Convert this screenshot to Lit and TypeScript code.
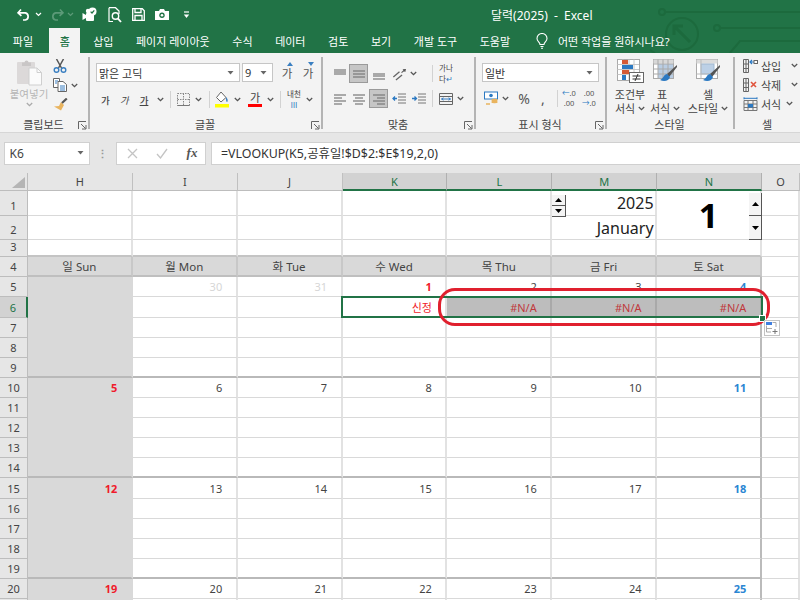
import { LitElement, html, css, svg } from "lit";
import { customElement } from "lit/decorators.js";

const chev = html`<svg class="chev" width="7" height="5" viewBox="0 0 7 5"><path d="M.8 1 3.5 3.7 6.2 1" fill="none" stroke="#555" stroke-width="1.3"/></svg>`;
const tri = html`<svg width="7" height="4" viewBox="0 0 7 4"><path d="M.5 0h6L3.5 3.6z" fill="#666"/></svg>`;
const launcher = html`<svg class="launch" width="9" height="9" viewBox="0 0 9 9"><path d="M.5 8V.5H8M3 3l4.500 4.500M4 8h4V4" fill="none" stroke="#666" stroke-width="1"/></svg>`;
const qchev = html`<svg width="7" height="5" viewBox="0 0 7 5"><path d="M1 1l2.500 2.500L6 1" fill="none" stroke="#fff" stroke-width="1.2"/></svg>`;
const qchevDim = html`<svg width="7" height="5" viewBox="0 0 7 5"><path d="M1 1l2.500 2.500L6 1" fill="none" stroke="#5c9a78" stroke-width="1.2"/></svg>`;
const vsep = html`<span class="vsep"></span>`;

const lines = (ys: number[][], stroke = "#777") =>
  svg`${ys.map(([x1, x2, y]) => svg`<path d="M${x1} ${y}H${x2}" stroke=${stroke} stroke-width="1.2"/>`)}`;
const alignIcon = (ys: number[][]) => html`<svg width="14" height="14" viewBox="0 0 14 14">${lines(ys)}</svg>`;

const icons = {
  undo: html`<svg width="14" height="13" viewBox="0 0 14 13"><path d="M4 1.500 1 4.800l3.400 3M1.500 4.800h6.800a3.700 3.700 0 0 1 0 7.200H6" fill="none" stroke="#fff" stroke-width="1.7"/></svg>`,
  redo: html`<svg width="14" height="13" viewBox="0 0 14 13"><path d="M10 1.500l3 3.300-3.400 3M12.500 4.800H5.700a3.700 3.700 0 0 0 0 7.200H8" fill="none" stroke="#5c9a78" stroke-width="1.7"/></svg>`,
  qa1: html`<svg width="16" height="15" viewBox="0 0 16 15"><path d="M.5 6 4 8v3l-3.500 2z" fill="#fff"/><rect x="4" y="6" width="8" height="8" rx="1" fill="#fff"/><circle cx="10.500" cy="4.500" r="4" fill="#fff"/><path d="M8.600 4.600l1.400 1.400 2.300-2.600" fill="none" stroke="#217346" stroke-width="1.2"/><circle cx="6" cy="4" r="2.200" fill="#fff"/></svg>`,
  qa2: html`<svg width="14" height="16" viewBox="0 0 14 16"><path d="M1 .7h6.500L11 4v3M1 .7V14.500h4" fill="none" stroke="#fff" stroke-width="1.2"/><circle cx="7.500" cy="9" r="3.200" fill="none" stroke="#fff" stroke-width="1.400"/><path d="M9.800 11.300 13 15" stroke="#fff" stroke-width="1.800"/></svg>`,
  save: html`<svg width="13" height="13" viewBox="0 0 13 13"><path d="M.7.7h9.600L12.300 2.700V12.300H.7z" fill="none" stroke="#fff" stroke-width="1.300"/><path d="M3 1v3.500h6V1M3 12V7.500h7V12" fill="none" stroke="#fff" stroke-width="1.300"/></svg>`,
  camera: html`<svg width="14" height="11" viewBox="0 0 14 11"><path d="M0 2h4l1-2h4l1 2h4v9H0z" fill="#fff"/><circle cx="7" cy="6.200" r="2.700" fill="#217346"/><circle cx="7" cy="6.200" r="1.300" fill="#fff"/></svg>`,
  more: html`<svg width="7" height="8" viewBox="0 0 7 8"><path d="M1 1h5" stroke="#fff" stroke-width="1.200"/><path d="M.8 3.500h5.400L3.500 7z" fill="#fff"/></svg>`,
  bulb: html`<svg width="12" height="16" viewBox="0 0 12 16"><path d="M4 11.500C4 9 1 8.500 1 5.500a5 5 0 0 1 10 0c0 3-3 3.500-3 6zM4.500 13.500h3M5 15.300h2" fill="none" stroke="#fff" stroke-width="1.100"/></svg>`,
  paste: html`<svg width="25" height="27" viewBox="0 0 25 27"><rect x="0" y="3" width="18" height="22" rx="1" fill="#dcd9d9"/><path d="M5 3.500h2.500a2 2 0 0 1 4 0H14V7H5z" fill="#c9c6c6"/><path d="M12 9h8l4.500 4.500V26H12z" fill="#fbfbfb" stroke="#cfcfcf"/><path d="M20 9v4.500h4.500" fill="none" stroke="#cfcfcf"/></svg>`,
  cut: html`<svg width="14" height="14" viewBox="0 0 14 14"><path d="M3.500 0l5 9M10.500 0l-5 9" stroke="#555" stroke-width="1.500"/><circle cx="3.500" cy="11" r="2.300" fill="none" stroke="#3a7fc1" stroke-width="1.400"/><circle cx="10.500" cy="11" r="2.300" fill="none" stroke="#3a7fc1" stroke-width="1.400"/></svg>`,
  copy: html`<svg width="14" height="14" viewBox="0 0 14 14"><path d="M.5.500h6v9h-6z" fill="#fff" stroke="#666"/><path d="M5 3.500h5l3.500 3v7H5z" fill="#fff" stroke="#666"/><path d="M7 8h5M7 10h5M7 12h5M2 3h3M2 5h2" stroke="#3a7fc1"/></svg>`,
  brush: html`<svg width="15" height="13" viewBox="0 0 15 13"><path d="M8 4l3 3-3 5.500L1 8.500l5-.5z" fill="#e9b45f"/><path d="M9 5l4.800-4.500" stroke="#555" stroke-width="2.200"/></svg>`,
  grow: html`<span class="gy"><i>가</i><svg width="6" height="4" viewBox="0 0 6 4"><path d="M3 0l3 4H0z" fill="#3a7fc1"/></svg></span>`,
  shrink: html`<span class="gy"><i>가</i><svg width="6" height="4" viewBox="0 0 6 4"><path d="M3 4l3-4H0z" fill="#3a7fc1"/></svg></span>`,
  border: html`<svg width="13" height="13" viewBox="0 0 13 13"><path d="M.500.500h12v12H.500zM6.500.500v12M.500 6.500h12" fill="none" stroke="#888" stroke-width="1" stroke-dasharray="1.500 1"/><path d="M.500 12.500h12" stroke="#777"/></svg>`,
  fill: html`<svg width="14" height="17" viewBox="0 0 14 17"><path d="M6 1 1.500 6.500 6 11l5-4.500z" fill="#fff" stroke="#666"/><path d="M11 6c1.500 1.500 2 3 1.500 4.500s-2-.5-1.500-4.500z" fill="#3a7fc1"/><rect x="0" y="13" width="14" height="3.500" fill="#ffff00"/></svg>`,
  mergeWrap: html`<svg width="14" height="12" viewBox="0 0 14 12"><path d="M.500.500h13v11H.500zM.500 3.500h13M.500 8.500h13" fill="none" stroke="#666"/><path d="M2.500 6h9M4.500 4.800 2.500 6l2 1.200M9.500 4.800l2 1.200-2 1.200" fill="none" stroke="#3a7fc1"/></svg>`,
  orient: html`<svg width="16" height="14" viewBox="0 0 16 14"><g transform="rotate(-40 8 7)"><path d="M1 5h8M1 9h8" stroke="#666" stroke-width="1.300"/><path d="M10 7h5M13 5.500 15 7l-2 1.500" fill="none" stroke="#555"/></g></svg>`,
  indL: html`<svg width="14" height="12" viewBox="0 0 14 12"><path d="M6 1h8M6 4h8M6 7h8M6 10h8" stroke="#777"/><path d="M5 5.500H1M3 3.500l-2 2 2 2" fill="none" stroke="#2b79c2" stroke-width="1.300"/></svg>`,
  indR: html`<svg width="14" height="12" viewBox="0 0 14 12"><path d="M6 1h8M6 4h8M6 7h8M6 10h8" stroke="#777"/><path d="M0 5.500h4M2.500 3.500l2 2-2 2" fill="none" stroke="#2b79c2" stroke-width="1.300"/></svg>`,
  acct: html`<svg width="15" height="15" viewBox="0 0 15 15"><rect x=".5" y="1" width="13" height="7" fill="#fff" stroke="#2b79c2"/><circle cx="7" cy="4.500" r="1.800" fill="#2b79c2"/><ellipse cx="10.500" cy="9" rx="3.200" ry="1.200" fill="#e9b45f"/><ellipse cx="10.500" cy="11" rx="3.200" ry="1.200" fill="#e9b45f"/><path d="M2 13h4" stroke="#e9b45f" stroke-width="1.500"/></svg>`,
  cond: html`<svg width="27" height="24" viewBox="0 0 27 24"><rect x=".5" y=".5" width="22" height="21" fill="#fff" stroke="#aaa"/><path d="M6 .5V21.500M12 .5V21.500M17 .5V21.500M.5 5.500H22M.5 10.500H22M.5 15.500H22" stroke="#c8c8c8"/><rect x="5" y="1" width="6" height="4" fill="#d45a35"/><rect x="5" y="6" width="11" height="4" fill="#2b79c2"/><rect x="5" y="11" width="7" height="4" fill="#d45a35"/><rect x="5" y="16" width="4" height="5" fill="#2b79c2"/><rect x="12.500" y="13.500" width="14" height="10" fill="#fff" stroke="#666"/><path d="M15.500 17h8M15.500 20h8M21 15l-3 7" stroke="#333" fill="none"/></svg>`,
  tbl: html`<svg width="25" height="24" viewBox="0 0 25 24"><rect x=".5" y=".5" width="20" height="19" fill="#fff" stroke="#aaa"/><rect x=".5" y=".5" width="20" height="4" fill="#d8d8d8"/><rect x="5" y="5" width="15" height="14" fill="#b9cde3"/><path d="M5 .5V19.500M10 .5V19.500M15 .5V19.500M.5 5H20.500M.5 10H20.500M.5 15H20.500" stroke="#a9a9a9"/><path d="M24 6 14 15l2 3 8-10z" fill="#555"/><path d="M14 15c-3 0-3 4-7 6 4 2 9 1 10-3z" fill="#2b79c2"/></svg>`,
  cellS: html`<svg width="25" height="24" viewBox="0 0 25 24"><rect x=".5" y=".5" width="21" height="19" fill="#fff" stroke="#aaa"/><rect x=".5" y=".5" width="21" height="4" fill="#dcdcdc"/><rect x="5" y="5" width="13" height="10" fill="#bcd0e6" stroke="#9fb7d0"/><path d="M5 .5V19.500M.5 15H21.500" stroke="#bbb"/><path d="M24 6 14 15l2 3 8-10z" fill="#555"/><path d="M14 15c-3 0-3 4-7 6 4 2 9 1 10-3z" fill="#2b79c2"/></svg>`,
  ins: html`<svg width="15" height="14" viewBox="0 0 15 14"><path d="M.500.500h5v13h-5zM.500 5h5M.500 9.500h5M3 .500v13" fill="none" stroke="#666"/><path d="M7 3H12M9 1 7 3l2 2" fill="none" stroke="#2b79c2" stroke-width="1.200"/><rect x="11" y="1.500" width="3.500" height="3" fill="#fff" stroke="#666"/></svg>`,
  del: html`<svg width="15" height="14" viewBox="0 0 15 14"><path d="M.500.500h5v13h-5zM.500 5h5M.500 9.500h5M3 .500v13" fill="none" stroke="#666"/><path d="M8 4l5 5M13 4 8 9" stroke="#e0533c" stroke-width="1.600"/></svg>`,
  fmt: html`<svg width="15" height="14" viewBox="0 0 15 14"><path d="M1 3.500h13v10H1zM1 7h13M1 10.500h13M5 3.500v10M10 3.500v10" fill="none" stroke="#777"/><rect x="5" y="7" width="5" height="3.500" fill="#2b79c2"/><path d="M1 1.300h13M1 .3v2M14 .3v2" stroke="#2b79c2"/></svg>`,
  quick: html`<svg width="12" height="12" viewBox="0 0 12 12"><rect x="0" y="0" width="6" height="3" fill="#3f7fe0"/><path d="M6.500.5H10V5M.5 3.500V10H5M.5 6.500H6" fill="none" stroke="#aaa"/><path d="M9 7v5M6.500 9.500h5" stroke="#777"/></svg>`,
};

const tabs = ["삽입", "페이지 레이아웃", "수식", "데이터", "검토", "보기", "개발 도구", "도움말"];
const colsL = ["H", "I", "J", "K", "L", "M", "N", "O"];
const rowHeights = [25, 24, 17, 20, 20, 21, 20, 20, 20, 20, 20, 20, 20, 20, 21, 20, 20, 20, 20, 20, 20];
const weeks: Record<number, (number | string)[]> = {
  5: ["", 30, 31, 1, 2, 3, 4],
  10: [5, 6, 7, 8, 9, 10, 11],
  15: [12, 13, 14, 15, 16, 17, 18],
  20: [19, 20, 21, 22, 23, 24, 25],
};
const dows = ["일 Sun", "월 Mon", "화 Tue", "수 Wed", "목 Thu", "금 Fri", "토 Sat"];

@customElement("app-root")
export class AppRoot extends LitElement {
  static styles = css`
    :host { display: block; width: 800px; height: 600px; overflow: hidden; background: #e6e6e6;
      font-family: "Noto Sans", "Noto Sans CJK KR", sans-serif; font-size: 11px; color: #444; }
    * { box-sizing: border-box; }
    .head { position: relative; background: #217346; color: #fff; height: 53px; }
    .circuit { position: absolute; right: 0; top: 0; }
    .titlebar { height: 28px; display: grid; grid-template-columns: 491px 1fr; align-items: center; position: relative; }
    .qat { display: grid; grid-template-columns: 17px 14px 14px 5px 14px 12px 28px 22px 24px 24px 24px;
      align-items: center; justify-items: center; padding-top: 1px; width: 198px; }
    .title { font-size: 12px; padding-top: 2px; white-space: pre; }
    .tabs { height: 25px; display: flex; align-items: center; position: relative; font-size: 11px; padding-left: 1.5px; }
    .tab { padding: 0 11.3px; white-space: nowrap; }
    .tab.first { margin-right: 5px; }
    .tab.active { background: #f3f3f3; color: #217346; height: 25px; display: flex; align-items: center; width: 31px; justify-content: center; padding: 0; margin-right: 1.5px; font-weight: 500; }
    .tell { display: flex; align-items: center; gap: 10px; margin-left: 14.5px; }

    .ribbon { height: 80px; background: #f3f3f3; border-bottom: 1px solid #d6d6d6; display: flex; }
    .grp { margin: 4px 0 3px; border-right: 2px solid #b4b4b4; display: grid; grid-template-rows: minmax(0, 1fr) 12px; flex: none; }
    .grp.last { border-right: 0; flex: 1; }
    .g1 { width: 90px; } .g2 { width: 233px; } .g3 { width: 153px; } .g4 { width: 131px; } .g5 { width: 128px; }
    .foot { display: grid; grid-template-columns: 1fr auto 1fr; align-items: center; justify-items: center; font-size: 11px; padding: 2px 1px 0 0; margin-bottom: -2px; height: 14px; line-height: 12px; }
    .launch { justify-self: end; }
    .c { display: flex; align-items: center; justify-content: center; min-width: 0; }
    .vsep { width: 1px; height: 17px; background: #d2d2d2; display: block; }
    .clip { display: grid; grid-template-columns: 44px 30px; padding: 2px 0 0 7px; }
    .paste { display: flex; flex-direction: column; align-items: center; color: #b5b5b5; font-size: 10.5px; gap: 0; }
    .paste span { margin-top: 1px; line-height: 15px; white-space: nowrap; }
    .paste svg.chev path { stroke: #aaa; }
    .clipS { display: grid; grid-template-rows: 13px 13px 13px; row-gap: 6.500px; padding-left: 2px; }
    .clipS .c { justify-content: flex-start; gap: 4px; }
    .r { display: grid; align-items: center; justify-items: center; }
    .combo { height: 19px; background: #fff; border: 1.5px solid #c6c6c6; display: flex; align-items: center; justify-content: space-between; padding: 0 5px 0 2px; color: #333; font-size: 11px; }
    .fr1 { grid-template-columns: 144px 33px 8px 12px 9px 12px; margin: 6px 0 0 6px; column-gap: 0; justify-items: stretch; height: 19px; }
    .fr1 .size { margin-left: 2px; }
    .gy { position: relative; display: inline-flex; font-size: 11.5px; color: #555; }
    .gy i { font-style: normal; }
    .gy svg { position: absolute; top: -3px; right: -1px; }
    .fr2 { grid-template-columns: 18.5px 19.5px 20px 12px 8px 18px 12px 10px 16px 14px 22px 8px 12px 16px 14px; margin: 7px 0 0 6px; height: 18px; }
    .bi { font-size: 9.500px; color: #444; font-weight: 500; }
    .bi.it { font-weight: 400; font-style: italic; }
    .bi.un { text-decoration: underline; font-weight: 500; }
    .fc { display: flex; flex-direction: column; align-items: center; font-size: 11px; line-height: 12px; color: #444; }
    .fc b { display: block; width: 14px; height: 3.500px; background: #ff0000; margin-top: 0; }
    .wrapT { font-size: 7.5px; line-height: 10.5px; text-align: center; color: #444; }
    .wrapT em { color: #2b79c2; font-style: normal; }
    .ar1 { grid-template-columns: 17px 1px 19px 22px 19px 8px 11px 8px 20px; margin: 6px 0 0 8px; height: 19px; }
    .ar2 { grid-template-columns: 18px 20px 19px 1px 20px 20px 7px 20px 8px; margin: 7px 0 0 8px; height: 19px; }
    .pressed { width: 19px; height: 19px; background: #c6c6c6; border: 1px solid #9a9a9a; }
    .nr1 { margin: 6px 0 0 6px; width: 117px; }
    .nr2 { grid-template-columns: 16px 12px 3px 20px 18px 10px 14px 6px 14px; margin: 6px 0 0 7px; height: 19px; }
    .big { font-size: 14px; color: #555; }
    .dec { font-size: 7.500px; line-height: 10px; text-align: center; color: #555; }
    .dec em { color: #2b79c2; font-style: normal; }
    .sr { display: grid; grid-template-columns: 32px 34px 2px 40px; column-gap: 2px; padding: 2px 0 0 7px; }
    .st { display: flex; flex-direction: column; align-items: center; font-size: 11px; line-height: 13px; white-space: nowrap; }
    .st .ic { height: 27px; margin-bottom: 2px; display: flex; align-items: flex-start; }
    .st span { display: flex; align-items: center; gap: 3px; height: 13.500px; }
    .st .sh { padding-right: 6px; }
    .cr { display: grid; grid-template-rows: repeat(3, 19px); padding: 0 0 0 8px; margin-top: -1px; }
    .crow { display: grid; grid-template-columns: 18px 30px 8px; align-items: center; font-size: 11px; justify-items: start; }
    .crow.s { grid-template-columns: 18px 25px 8px; }

    .fbar { height: 40px; padding: 8.500px 0 0 3.500px; display: grid; grid-template-columns: 86px 26.500px 90px 5px 1fr; align-items: stretch; }
    .fbar > div { height: 23px; }
    .fbox { background: #fff; border: 1px solid #d0d0d0; display: flex; align-items: center; }
    .name { padding: 0 5px 0 5px; justify-content: space-between; font-size: 12px; color: #444; }
    .dots { display: flex; justify-content: center; align-items: center; color: #999; font-size: 11px; font-weight: 700; }
    .fxb { display: grid; grid-template-columns: repeat(3, 30px); justify-items: center; align-items: center; }
    .fx { font-family: "Liberation Serif", serif; font-style: italic; font-size: 13px; color: #555; font-weight: 700; }
    .input { padding-left: 9px; font-size: 12.4px; color: #333; border-right: 0; white-space: nowrap; }

    .sheet { position: relative; height: 428px; overflow: hidden; display: grid; background: #fff;
      grid-template-columns: 28px repeat(7, 104.857px) 1fr; grid-auto-rows: 20px; align-content: start; }
    .corner { background: #e6e6e6; border-right: 1px solid #bdbdbd; border-bottom: 1px solid #bdbdbd; display: flex; align-items: flex-end; justify-content: flex-end; padding: 0 2px 2px 0; }
    .ch { background: #e6e6e6; border-right: 1px solid #c0c0c0; border-bottom: 1px solid #bdbdbd; display: flex; align-items: center; justify-content: center; font-size: 11px; color: #444; }
    .ch.sel { background: #d2d2d2; color: #217346; border-bottom: 2px solid #217346; border-right-color: #b0b0b0; }
    .rh { background: #e6e6e6; border-right: 1px solid #bdbdbd; border-bottom: 1px solid #bdbdbd; display: flex; align-items: flex-end; justify-content: center; font-size: 11px; color: #444; line-height: 18px; }
    .rh.sel { background: #d2d2d2; color: #217346; border-right: 2px solid #217346; }
    .cell { background: #fff; border-right: 2px solid #e2e2e2; border-bottom: 1px solid #d9d9d9; display: flex; align-items: center; justify-content: flex-end; padding-right: 13.5px; font-size: 11px; color: #444; white-space: nowrap; overflow: hidden; }
    .cell.sun { background: #d9d9d9; border-right-color: #d9d9d9; border-bottom-color: #d9d9d9; }
    .cell.lastc { border-right-color: #bbb; }
    .cell.week { border-bottom: 2px solid #b9b9b9; }
    .cell.top { border-bottom: 2px solid #c4c4c4; }
    .cell.hdr { background: #d9d9d9; justify-content: center; padding: 0; border-right: 2px solid #c8c8c8; border-bottom: 2px solid #bfbfbf; font-size: 11.500px; color: #444; }
    .cell.red { color: #f01b2b; font-weight: 700; }
    .cell.blue { color: #2b86d3; font-weight: 700; }
    .cell.faint { color: #d6d6d6; }
    .cell.hol { color: #f01b2b; }
    .cell.na { background: #bdbdbd; color: #c0383c; border-right-color: #a9a9a9; border-bottom-color: #bdbdbd; }
    .cell.m { font-size: 16px; color: #222; padding-right: 1.5px; }
    .cell.n { grid-row: span 2; font-size: 34px; font-weight: 700; color: #000; justify-content: center; padding: 0; border-bottom-color: #d9d9d9; }
    .selbox { position: absolute; left: 341px; top: 123px; width: 422px; height: 22px; border: 2px solid #217346; }
    .handle { position: absolute; left: 758.500px; top: 141.500px; width: 7px; height: 7px; background: #217346; border: 1px solid #fff; }
    .ring { position: absolute; left: 438px; top: 115px; width: 332px; height: 37.500px; border: 3.500px solid #e0202e; border-radius: 17px; }
    .quick { position: absolute; left: 764px; top: 147px; width: 16px; height: 16px; background: #fff; border: 1px solid #c4c4c4; display: flex; align-items: center; justify-content: center; }
    .spin { position: absolute; display: grid; background: #f0f0f0; }
    .spin div { display: flex; align-items: center; justify-content: center; background: #f4f4f4; border-right: 1px solid #555; border-bottom: 1px solid #555; }
    .sp1 { left: 552px; top: 22px; width: 14px; height: 22px; grid-template-rows: 11px 11px; }
    .sp2 { left: 749px; top: 20px; width: 13px; height: 47px; grid-template-rows: 23px 24px; }
  `;

  private spinArrow(up: boolean) {
    return html`<svg width="7" height="4" viewBox="0 0 7 4"><path d=${up ? "M3.500 0 7 4H0z" : "M0 0h7L3.500 4z"} fill="#000"/></svg>`;
  }

  private renderRow(i: number) {
    const rn = i + 1;
    const cells: unknown[] = [html`<div class="rh ${rn === 6 ? "sel" : ""}">${rn === 21 ? "" : rn}</div>`];
    if (rn === 4) {
      dows.forEach((d) => cells.push(html`<div class="cell hdr">${d}</div>`));
      cells.push(html`<div class="cell"></div>`);
      return cells;
    }
    for (let c = 0; c < 8; c++) {
      let cls = "";
      let t: unknown = "";
      if (c < 7 && rn >= 5) {
        if (c === 0) cls += " sun";
        if (c === 6) cls += " lastc";
        if (rn === 9 || rn === 14 || rn === 19) cls += " week";
        if (weeks[rn]) {
          t = weeks[rn][c];
          if (c === 0) cls += " red";
          else if (c === 6) cls += " blue";
          if (rn === 5 && (c === 1 || c === 2)) cls += " faint";
          if (rn === 5 && c === 3) cls += " red";
        }
        if (rn === 6 && c === 3) { t = "신정"; cls += " hol"; }
        if (rn === 6 && c > 3) { t = "#N/A"; cls += " na"; }
      }
      if (rn === 3 && c < 7) cls += " top";
      if (rn === 1 && c === 5) { t = "2025"; cls += " m"; }
      if (rn === 2 && c === 5) { t = "January"; cls += " m"; }
      if (rn === 1 && c === 6) { t = "1"; cls += " n"; }
      if (rn === 2 && c === 6) continue;
      cells.push(html`<div class="cell ${cls}">${t}</div>`);
    }
    return cells;
  }

  render() {
    const rowsCss = `18px ${rowHeights.map((h) => h + "px").join(" ")}`;
    return html`
      <div class="head">
        <svg class="circuit" width="150" height="53" viewBox="650 0 150 53">
          <g fill="none" stroke="#1c6a3d" stroke-width="2">
            <circle cx="662" cy="12" r="3"/><path d="M665 12H800"/>
            <circle cx="682" cy="34" r="16"/><path d="M690 42 674 26M674 35v-9h9" stroke-width="3"/>
            <circle cx="717" cy="28" r="3"/><path d="M720 28H800"/>
            <path d="M650 50l5 3M730 53l10-12H800"/>
          </g>
        </svg>
        <div class="titlebar">
          <div class="qat">
            <i></i>${icons.undo}${qchev}<i></i>${icons.redo}${qchevDim}
            ${icons.qa1}${icons.qa2}${icons.save}${icons.camera}${icons.more}
          </div>
          <div class="title">달력(2025)  -  Excel</div>
        </div>
        <div class="tabs">
          <div class="tab first">파일</div>
          <div class="tab active">홈</div>
          ${tabs.map((t) => html`<div class="tab">${t}</div>`)}
          <div class="tell">${icons.bulb}<span>어떤 작업을 원하시나요?</span></div>
        </div>
      </div>
      <div class="ribbon">
        <section class="grp g1">
          <div class="clip">
            <div class="paste">${icons.paste}<span>붙여넣기</span>${chev}</div>
            <div class="clipS">
              <div class="c">${icons.cut}</div>
              <div class="c">${icons.copy}${chev}</div>
              <div class="c">${icons.brush}</div>
            </div>
          </div>
          <div class="foot"><i></i><span>클립보드</span>${launcher}</div>
        </section>
        <section class="grp g2">
          <div>
            <div class="r fr1">
              <div class="combo"><span>맑은 고딕</span>${tri}</div>
              <div class="combo size"><span>9</span>${tri}</div>
              <i></i><div class="c">${icons.grow}</div><i></i><div class="c">${icons.shrink}</div>
            </div>
            <div class="r fr2">
              <span class="bi">가</span><span class="bi it">가</span><span class="bi un">가</span>${chev}${vsep}
              ${icons.border}${chev}${vsep}${icons.fill}${chev}
              <div class="fc">가<b></b></div>${chev}${vsep}
              <div class="wrapT">내천<br /><em>Ⅲ</em></div>${chev}
            </div>
          </div>
          <div class="foot"><i></i><span>글꼴</span>${launcher}</div>
        </section>
        <section class="grp g3">
          <div>
            <div class="r ar1">
              ${alignIcon([[1, 13, 3], [1, 13, 5], [1, 13, 7]])}<i></i>
              <div class="c pressed">${alignIcon([[1, 13, 4], [1, 13, 7], [1, 13, 10]])}</div>
              ${alignIcon([[1, 13, 7], [1, 13, 9], [1, 13, 12]])}
              ${icons.orient}${chev}<i></i>${vsep}
              <div class="wrapT">가나<br />다<em>↵</em></div>
            </div>
            <div class="r ar2">
              ${alignIcon([[1, 13, 3], [1, 9, 6], [1, 13, 9], [1, 9, 12]])}
              ${alignIcon([[1, 13, 3], [3, 11, 6], [1, 13, 9], [3, 11, 12]])}
              <div class="c pressed">${alignIcon([[1, 13, 3], [5, 13, 6], [1, 13, 9], [5, 13, 12]])}</div>
              <i></i>${icons.indL}${icons.indR}${vsep}${icons.mergeWrap}${chev}
            </div>
          </div>
          <div class="foot"><i></i><span>맞춤</span>${launcher}</div>
        </section>
        <section class="grp g4">
          <div>
            <div class="nr1 combo"><span>일반</span>${tri}</div>
            <div class="r nr2">
              ${icons.acct}${chev}<i></i><span class="big">%</span><span class="big">,</span>${vsep}
              <div class="dec"><em>←</em>.0<br />.00</div><i></i>
              <div class="dec">.00<br /><em>→</em>.0</div>
            </div>
          </div>
          <div class="foot"><i></i><span>표시 형식</span>${launcher}</div>
        </section>
        <section class="grp g5">
          <div class="sr">
            <div class="st"><div class="ic">${icons.cond}</div><span>조건부</span><span>서식 ${chev}</span></div>
            <div class="st"><div class="ic">${icons.tbl}</div><span class="sh">표</span><span>서식 ${chev}</span></div>
            <i></i>
            <div class="st"><div class="ic">${icons.cellS}</div><span>셀</span><span>스타일 ${chev}</span></div>
          </div>
          <div class="foot"><i></i><span>스타일</span><i></i></div>
        </section>
        <section class="grp last">
          <div class="cr">
            <div class="crow">${icons.ins}<span>삽입</span>${chev}</div>
            <div class="crow">${icons.del}<span>삭제</span>${chev}</div>
            <div class="crow s">${icons.fmt}<span>서식</span>${chev}</div>
          </div>
          <div class="foot"><i></i><span>셀</span><i></i></div>
        </section>
      </div>
      <div class="fbar">
        <div class="fbox name"><span>K6</span>${tri}</div>
        <div class="dots">⋮</div>
        <div class="fbox fxb">
          <svg width="11" height="11" viewBox="0 0 11 11"><path d="M1 1l9 9M10 1l-9 9" stroke="#c4c4c4" stroke-width="1.300"/></svg>
          <svg width="12" height="11" viewBox="0 0 12 11"><path d="M1 6l3.500 4L11 1" fill="none" stroke="#c4c4c4" stroke-width="1.300"/></svg>
          <span class="fx">fx</span>
        </div>
        <i></i>
        <div class="fbox input">=VLOOKUP(K5,공휴일!$D$2:$E$19,2,0)</div>
      </div>
      <div class="sheet" style="grid-template-rows:${rowsCss}">
        <div class="corner"><svg width="13" height="11" viewBox="0 0 13 11"><path d="M13 0v11H0z" fill="#b5b5b5"/></svg></div>
        ${colsL.map((c) => html`<div class="ch ${"KLMN".includes(c) ? "sel" : ""}">${c}</div>`)}
        ${rowHeights.map((_, i) => this.renderRow(i))}
        <div class="selbox"></div>
        <div class="ring"></div>
        <div class="handle"></div>
        <div class="quick">${icons.quick}</div>
        <div class="spin sp1"><div>${this.spinArrow(true)}</div><div>${this.spinArrow(false)}</div></div>
        <div class="spin sp2"><div>${this.spinArrow(true)}</div><div>${this.spinArrow(false)}</div></div>
      </div>
    `;
  }
}
